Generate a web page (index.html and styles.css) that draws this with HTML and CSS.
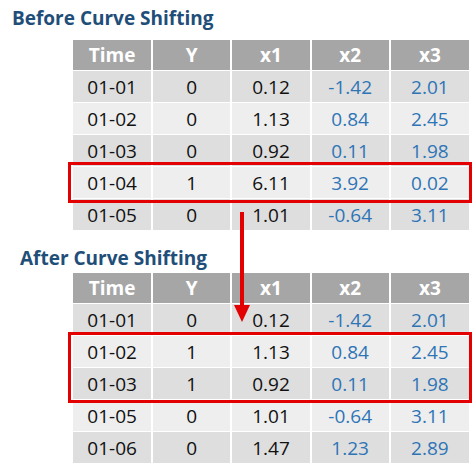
FILE: index.html
```html
<!DOCTYPE html>
<html>
<head>
  <title>Curve Shifting</title>
  <link rel="stylesheet" href="styles.css">
</head>
<body>
  <div class="page">
    <h2 class="title title-before">Before Curve Shifting</h2>
    <div class="table-wrap">
      <table class="data">
        <thead>
          <tr><th>Time</th><th>Y</th><th>x1</th><th>x2</th><th>x3</th></tr>
        </thead>
        <tbody>
          <tr><td>01-01</td><td>0</td><td>0.12</td><td class="blue">-1.42</td><td class="blue">2.01</td></tr>
          <tr><td>01-02</td><td>0</td><td>1.13</td><td class="blue">0.84</td><td class="blue">2.45</td></tr>
          <tr><td>01-03</td><td>0</td><td>0.92</td><td class="blue">0.11</td><td class="blue">1.98</td></tr>
          <tr><td>01-04</td><td>1</td><td>6.11</td><td class="blue">3.92</td><td class="blue">0.02</td></tr>
          <tr><td>01-05</td><td>0</td><td>1.01</td><td class="blue">-0.64</td><td class="blue">3.11</td></tr>
        </tbody>
      </table>
      <div class="highlight highlight-one"></div>
    </div>

    <h2 class="title title-after">After Curve Shifting</h2>
    <div class="table-wrap">
      <table class="data">
        <thead>
          <tr><th>Time</th><th>Y</th><th>x1</th><th>x2</th><th>x3</th></tr>
        </thead>
        <tbody>
          <tr><td>01-01</td><td>0</td><td>0.12</td><td class="blue">-1.42</td><td class="blue">2.01</td></tr>
          <tr><td>01-02</td><td>1</td><td>1.13</td><td class="blue">0.84</td><td class="blue">2.45</td></tr>
          <tr><td>01-03</td><td>1</td><td>0.92</td><td class="blue">0.11</td><td class="blue">1.98</td></tr>
          <tr><td>01-05</td><td>0</td><td>1.01</td><td class="blue">-0.64</td><td class="blue">3.11</td></tr>
          <tr><td>01-06</td><td>0</td><td>1.47</td><td class="blue">1.23</td><td class="blue">2.89</td></tr>
        </tbody>
      </table>
      <div class="highlight highlight-two"></div>
    </div>

    <!-- arrow from the shifted row down to the new table -->
    <svg class="arrow" width="18" height="112" viewBox="0 0 18 112">
      <rect x="6" y="0" width="4" height="96" fill="#e30000"/>
      <polygon points="0,93 16,93 8,110" fill="#e30000"/>
    </svg>
  </div>
</body>
</html>
```

FILE: styles.css
```css
body {
  margin: 0;
  background: #fff;
  font-family: "Open Sans", "Liberation Sans", sans-serif;
}
.page {
  position: relative;
  width: 474px;
  height: 470px;
  padding-top: 6px;
  box-sizing: border-box;
}
.title {
  margin: 0;
  font-size: 19px;
  line-height: 24px;
  font-weight: bold;
  color: #1f4e79;
}
.title-before {
  padding-left: 12px;
}
.title-after {
  padding-left: 20px;
  margin-top: 16px;
}
.table-wrap {
  position: relative;
  margin-left: 73px;
  width: 396px;
}
.title-before + .table-wrap {
  margin-top: 10px;
}
.title-after + .table-wrap {
  margin-top: 3px;
}
.data {
  width: 396px;
  table-layout: fixed;
  border-collapse: collapse;
  font-size: 19px;
}
.data th, .data td {
  text-align: center;
  padding: 0;
  border-left: 2px solid #fff;
  border-top: 1px solid #fff;
}
.data th:first-child, .data td:first-child {
  border-left: none;
}
.data thead th {
  height: 30px;
  border-top: none;
  background: #a6a6a6;
  color: #fff;
  font-weight: bold;
}
.data td {
  height: 31px;
  color: #111;
}
.data tbody tr:nth-child(odd) td {
  background: #dedede;
}
.data tbody tr:nth-child(even) td {
  background: #eeeeee;
}
.data td.blue {
  color: #2e75b6;
}
.highlight {
  position: absolute;
  left: -5px;
  right: -3px;
  border: 3px solid #e30000;
}
.highlight-one {
  top: 122px;
  height: 35px;
}
.highlight-two {
  top: 59px;
  height: 65px;
}
.arrow {
  position: absolute;
  left: 234px;
  top: 212px;
}
```
